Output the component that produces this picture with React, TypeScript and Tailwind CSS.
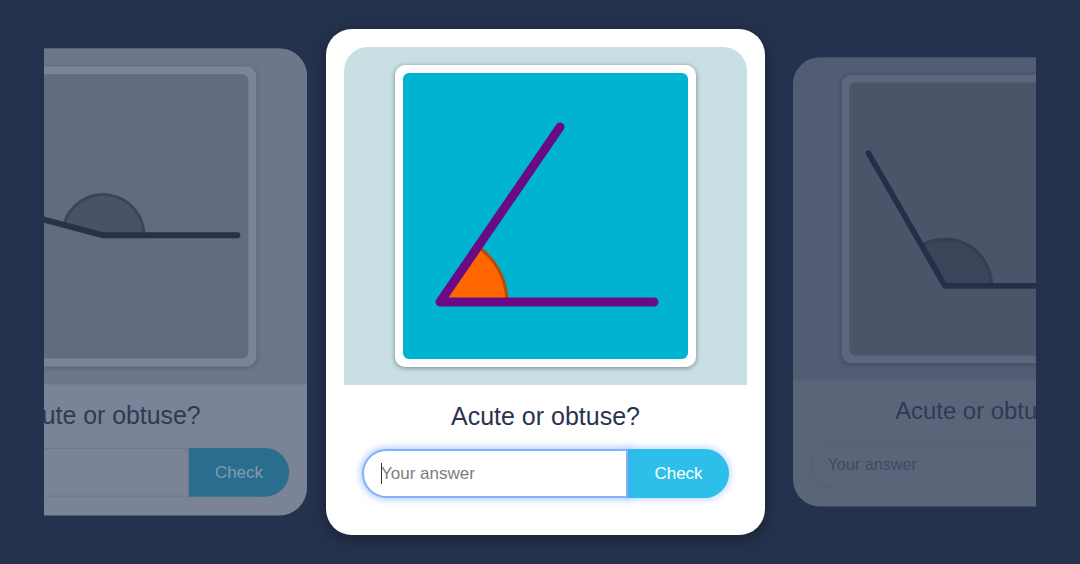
import React from 'react';

type Tone = 'active' | 'dim' | 'dimmer';

type Angle = {
  vertex: [number, number];
  arm: [number, number];
  base: [number, number];
  radius: number;
  stroke: number;
};

const tones: Record<Tone, {
  card: string;
  image: string;
  frame: string;
  inner: string;
  title: string;
  field: string;
  placeholder: string;
  button: string;
  line: string;
  arcFill: string;
  arcStroke: string;
}> = {
  active: {
    card: 'bg-white p-[18px] rounded-[26px] shadow-[0_4px_14px_rgba(0,0,0,0.35)]',
    image: 'bg-[#c8dfe3] rounded-t-[24px]',
    frame: 'bg-white shadow-[0_1px_5px_rgba(0,0,0,0.4)]',
    inner: 'bg-[#00b4d1]',
    title: 'text-[#2a3350]',
    field: 'border-2 border-[#80b3f7] bg-white shadow-[0_0_6px_2px_rgba(90,150,255,0.45)]',
    placeholder: 'placeholder:text-[#7d7d7d]',
    button: 'bg-[#2bbfea] text-white shadow-[0_0_6px_2px_rgba(90,150,255,0.35)]',
    line: '#6a0a86',
    arcFill: '#ff6600',
    arcStroke: '#b34d00',
  },
  dim: {
    card: 'bg-[#7b8396] rounded-[28px] overflow-hidden',
    image: 'bg-[#6e778a]',
    frame: 'bg-[#7b8499] shadow-[0_1px_5px_rgba(0,0,0,0.2)]',
    inner: 'bg-[#636b7e]',
    title: 'text-[#2f3a55]',
    field: 'border border-[#6f778b] bg-[#7b8396]',
    placeholder: 'placeholder:text-[#5d667b]',
    button: 'bg-[#2a6e8f] text-[#8799ad]',
    line: '#27324a',
    arcFill: '#4a5266',
    arcStroke: '#3c4458',
  },
  dimmer: {
    card: 'bg-[#5a657a] rounded-[28px] overflow-hidden',
    image: 'bg-[#525c72]',
    frame: 'bg-[#5c677d] shadow-[0_1px_5px_rgba(0,0,0,0.2)]',
    inner: 'bg-[#4a5569]',
    title: 'text-[#2e3a55]',
    field: 'border border-[#55607a] bg-[#5a657a]',
    placeholder: 'placeholder:text-[#404b63]',
    button: 'bg-[#245f7e] text-[#5f7790]',
    line: '#243047',
    arcFill: '#3a4559',
    arcStroke: '#333e52',
  },
};

// Angle with a shaded sector between the base line and the arm
function AngleDrawing({ angle, tone }: { angle: Angle; tone: Tone }) {
  const t = tones[tone];
  const [vx, vy] = angle.vertex;
  const [ax, ay] = angle.arm;
  const len = Math.hypot(ax - vx, ay - vy);
  const ex = vx + ((ax - vx) / len) * angle.radius;
  const ey = vy + ((ay - vy) / len) * angle.radius;
  const arc = `M ${vx} ${vy} L ${vx + angle.radius} ${vy} A ${angle.radius} ${angle.radius} 0 0 0 ${ex} ${ey} Z`;

  return (
    <svg viewBox="0 0 285 286" width="285" height="286" className="block">
      <path d={arc} fill={t.arcFill} stroke={t.arcStroke} strokeWidth={3} />
      <polyline
        points={`${ax},${ay} ${vx},${vy} ${angle.base[0]},${angle.base[1]}`}
        fill="none"
        stroke={t.line}
        strokeWidth={angle.stroke}
        strokeLinecap="round"
        strokeLinejoin="round"
      />
    </svg>
  );
}

function QuestionCard({ tone, angle, className = '' }: { tone: Tone; angle: Angle; className?: string }) {
  const t = tones[tone];
  const active = tone === 'active';

  return (
    <div className={`shrink-0 ${t.card} ${className}`}>
      <div className={`w-[403px] h-[338px] flex items-center justify-center ${t.image}`}>
        <div className={`w-[301px] h-[302px] p-2 rounded-[10px] ${t.frame}`}>
          <div className={`w-full h-full rounded-[6px] overflow-hidden ${t.inner}`}>
            <AngleDrawing angle={angle} tone={tone} />
          </div>
        </div>
      </div>

      <div className="w-[403px] pt-4 pb-[19px]">
        <h2 className={`text-center text-[25px] leading-[30px] ${t.title}`}>Acute or obtuse?</h2>
        <div className="mx-[18px] mt-[18px] flex h-[49px]">
          <div className="relative flex-1">
            <input
              type="text"
              placeholder="Your answer"
              className={`w-full h-full rounded-l-full rounded-r-none pl-[17px] pr-3 text-[17px] outline-none caret-transparent ${t.field} ${t.placeholder}`}
            />
            {active && <span className="absolute left-[19px] top-[14px] h-[21px] w-px bg-[#333]" />}
          </div>
          <button className={`w-[101px] rounded-r-full text-[17px] ${t.button}`}>Check</button>
        </div>
      </div>
    </div>
  );
}

export default function App() {
  return (
    <div
      className="h-[564px] w-full bg-[#25324d] flex"
      style={{ fontFamily: '"Liberation Sans", Arial, sans-serif' }}
    >
      <div className="ml-[44px] w-[992px] h-full overflow-hidden flex items-center">
        <QuestionCard
          tone="dim"
          className="-ml-[140px] origin-right scale-[0.994]"
          angle={{ vertex: [139, 162], arm: [-68, 107], base: [274, 162], radius: 41, stroke: 6 }}
        />
        <QuestionCard
          tone="active"
          className="ml-[19px]"
          angle={{ vertex: [37, 229], arm: [157, 54], base: [251, 229], radius: 67, stroke: 9 }}
        />
        <QuestionCard
          tone="dimmer"
          className="ml-[28px] origin-left scale-[0.955]"
          angle={{ vertex: [100, 213], arm: [20, 74], base: [300, 213], radius: 49, stroke: 6 }}
        />
      </div>
    </div>
  );
}
